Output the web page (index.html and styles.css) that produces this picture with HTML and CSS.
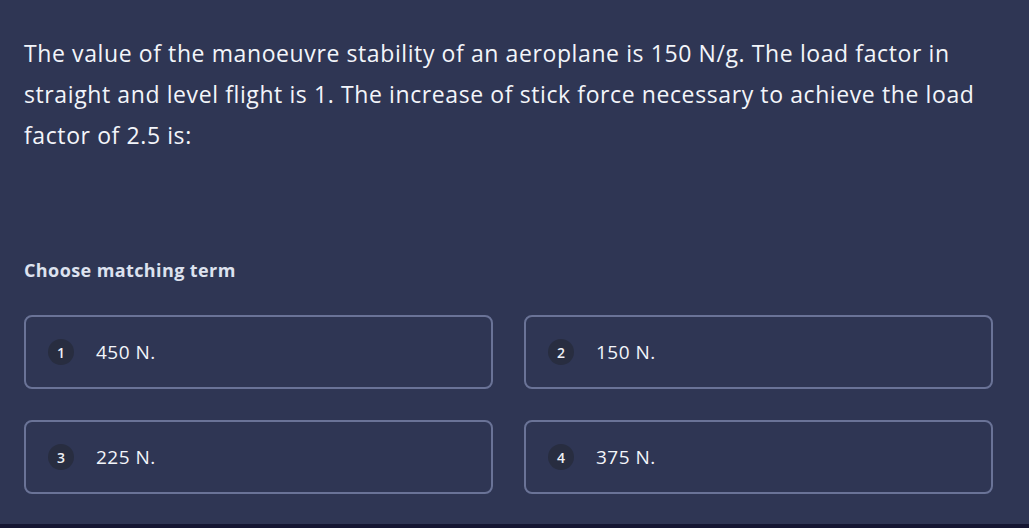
FILE: index.html
```html
<!DOCTYPE html>
<html lang="en">
<head>
<meta charset="utf-8">
<link rel="stylesheet" href="styles.css">
</head>
<body>
<div class="page">
  <p class="question">The value of the manoeuvre stability of an aeroplane is 150 N/g. The load factor in straight and level flight is 1. The increase of stick force necessary to achieve the load factor of 2.5 is:</p>
  <h2 class="label">Choose matching term</h2>
  <div class="options">
    <div class="option"><span class="badge">1</span><span class="text">450 N.</span></div>
    <div class="option"><span class="badge">2</span><span class="text">150 N.</span></div>
    <div class="option"><span class="badge">3</span><span class="text">225 N.</span></div>
    <div class="option"><span class="badge">4</span><span class="text">375 N.</span></div>
  </div>
</div>
</body>
</html>
```

FILE: styles.css
```css
html { background: #151632; }
body { margin: 0; font-family: "Open Sans", "Noto Sans", sans-serif; }
.page {
  height: 524px;
  box-sizing: border-box;
  background: #2f3654;
  padding: 33px 37px 0 24px;
  color: #f3f5fa;
}
.question {
  margin: 0;
  font-size: 23px;
  line-height: 41px;
  letter-spacing: 0.6px;
  max-width: 960px;
}
.label {
  margin: 103px 0 34px 0;
  font-size: 18px;
  line-height: 22px;
  font-weight: 700;
  letter-spacing: 0.4px;
  color: #dde2ef;
}
.options {
  display: grid;
  grid-template-columns: 469px 469px;
  grid-auto-rows: 74px;
  column-gap: 31px;
  row-gap: 31px;
}
.option {
  box-sizing: border-box;
  border: 2px solid #6a7397;
  border-radius: 8px;
  display: flex;
  align-items: center;
  padding-left: 22px;
  gap: 22px;
}
.badge {
  width: 26px;
  height: 26px;
  border-radius: 50%;
  background: #282d40;
  display: flex;
  align-items: center;
  justify-content: center;
  font-size: 14px;
  font-weight: 600;
  color: #eef0f6;
}
.text {
  font-size: 19px;
  letter-spacing: 0.5px;
  color: #f3f5fa;
}
```
